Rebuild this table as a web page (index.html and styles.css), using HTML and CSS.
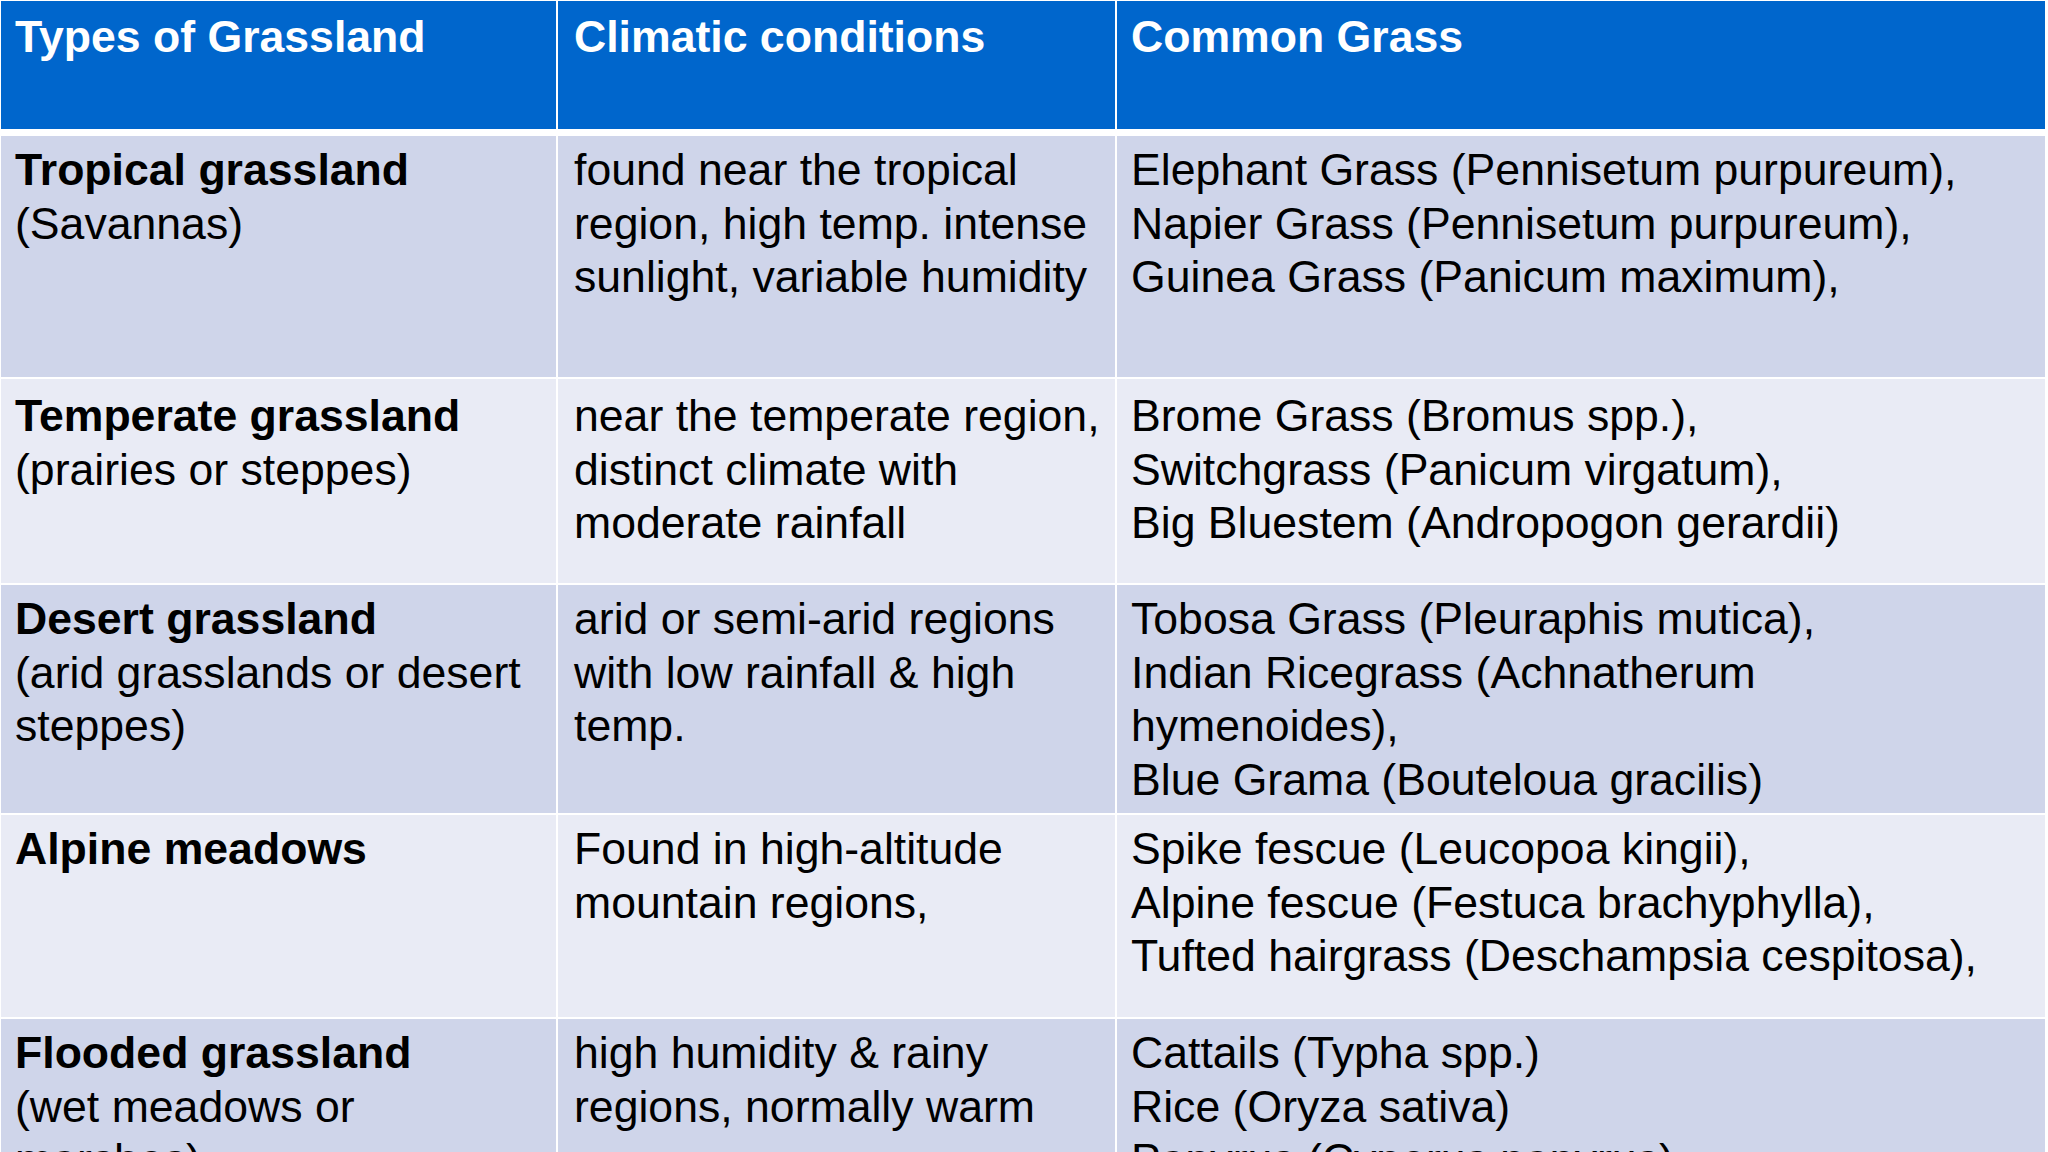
FILE: index.html
```html
<!DOCTYPE html>
<html lang="en">
<head>
<meta charset="utf-8">
<title>Types of Grassland</title>
<link rel="stylesheet" href="styles.css">
</head>
<body>
<div class="table">
  <div class="row head">
    <div class="cell">Types of Grassland</div>
    <div class="cell">Climatic conditions</div>
    <div class="cell">Common Grass</div>
  </div>
  <div class="row odd r1">
    <div class="cell"><b>Tropical grassland</b><br>(Savannas)</div>
    <div class="cell">found near the tropical<br>region, high temp. intense<br>sunlight, variable humidity</div>
    <div class="cell">Elephant Grass (Pennisetum purpureum),<br>Napier Grass (Pennisetum purpureum),<br>Guinea Grass (Panicum maximum),</div>
  </div>
  <div class="row even r2">
    <div class="cell"><b>Temperate grassland</b><br>(prairies or steppes)</div>
    <div class="cell">near the temperate region,<br>distinct climate with<br>moderate rainfall</div>
    <div class="cell">Brome Grass (Bromus spp.),<br>Switchgrass (Panicum virgatum),<br>Big Bluestem (Andropogon gerardii)</div>
  </div>
  <div class="row odd r3">
    <div class="cell"><b>Desert grassland</b><br>(arid grasslands or desert<br>steppes)</div>
    <div class="cell">arid or semi-arid regions<br>with low rainfall &amp; high<br>temp.</div>
    <div class="cell">Tobosa Grass (Pleuraphis mutica),<br>Indian Ricegrass (Achnatherum<br>hymenoides),<br>Blue Grama (Bouteloua gracilis)</div>
  </div>
  <div class="row even r4">
    <div class="cell"><b>Alpine meadows</b></div>
    <div class="cell">Found in high-altitude<br>mountain regions,</div>
    <div class="cell">Spike fescue (Leucopoa kingii),<br>Alpine fescue (Festuca brachyphylla),<br>Tufted hairgrass (Deschampsia cespitosa),</div>
  </div>
  <div class="row odd r5">
    <div class="cell"><b>Flooded grassland</b><br>(wet meadows or<br>marshes)</div>
    <div class="cell">high humidity &amp; rainy<br>regions, normally warm</div>
    <div class="cell">Cattails (Typha spp.)<br>Rice (Oryza sativa)<br>Papyrus (Cyperus papyrus)</div>
  </div>
</div>
</body>
</html>
```

FILE: styles.css
```css
html, body {
  margin: 0;
  padding: 0;
  background: #ffffff;
  overflow: hidden;
}
body {
  width: 2048px;
  height: 1152px;
  font-family: "Liberation Sans", Arial, sans-serif;
  font-size: 44.6px;
  line-height: 53.5px;
  color: #000000;
}
.table {
  display: flex;
  flex-direction: column;
  gap: 2px;
  padding: 1px 0 0 1px;
}
.row {
  display: grid;
  grid-template-columns: 555px 557px 928px;
  column-gap: 2px;
}
.cell {
  white-space: nowrap;
  padding: 7px 0 0 16px;
  overflow: hidden;
}
.row .cell:nth-child(1) {
  padding-left: 14px;
}
.row .cell:nth-child(3) {
  padding-left: 14px;
}
.head {
  height: 128px;
  margin-bottom: 5px;
}
.head .cell {
  background: #0066cc;
  color: #ffffff;
  font-weight: bold;
  padding-top: 9px;
}
.odd .cell {
  background: #cfd5ea;
}
.even .cell {
  background: #e9ebf5;
}
.r1 { height: 241px; }
.r2 { height: 204px; }
.r2 .cell { padding-top: 10px; }
.r3 { height: 228px; }
.r4 { height: 202px; }
.r5 { height: 240px; }
b {
  font-weight: bold;
}
```
